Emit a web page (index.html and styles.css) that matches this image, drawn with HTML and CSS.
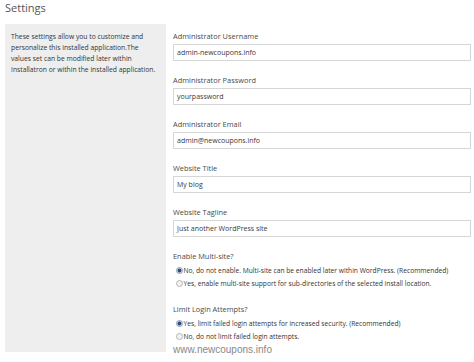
FILE: index.html
```html
<!DOCTYPE html>
<html>
<head>
<meta charset="utf-8">
<link rel="stylesheet" href="styles.css">
</head>
<body>
<h1 class="title">Settings</h1>
<div class="layout">
  <aside class="panel">
    <p>These settings allow you to customize and<br>personalize this installed application.The<br>values set can be modified later within<br>Installatron or within the installed application.</p>
  </aside>
  <main class="form">
    <div class="field">
      <div class="label">Administrator Username</div>
      <div class="input">admin-newcoupons.info</div>
    </div>
    <div class="field">
      <div class="label">Administrator Password</div>
      <div class="input">yourpassword</div>
    </div>
    <div class="field">
      <div class="label">Administrator Email</div>
      <div class="input">admin@newcoupons.info</div>
    </div>
    <div class="field">
      <div class="label">Website Title</div>
      <div class="input">My blog</div>
    </div>
    <div class="field">
      <div class="label">Website Tagline</div>
      <div class="input">Just another WordPress site</div>
    </div>
    <div class="group">
      <div class="label">Enable Multi-site?</div>
      <div class="radio"><span class="dot on"></span>No, do not enable. Multi-site can be enabled later within WordPress. (Recommended)</div>
      <div class="radio"><span class="dot"></span>Yes, enable multi-site support for sub-directories of the selected install location.</div>
    </div>
    <div class="group">
      <div class="label">Limit Login Attempts?</div>
      <div class="radio"><span class="dot on"></span>Yes, limit failed login attempts for increased security. (Recommended)</div>
      <div class="radio"><span class="dot"></span>No, do not limit failed login attempts.</div>
    </div>
    <div class="watermark">www.newcoupons.info</div>
  </main>
</div>
</body>
</html>
```
FILE: styles.css
```css
html, body { margin: 0; padding: 0; background: #fff; }
body { width: 474px; height: 362px; overflow: hidden; font-family: "Open Sans", "Noto Sans", sans-serif; color: #444; }
.title { margin: 0; padding: 0 0 0 5px; height: 24px; font-size: 11px; font-weight: normal; line-height: 16px; color: #555; }
.layout { display: flex; align-items: flex-start; }
.panel { margin-left: 5px; width: 161px; height: 328px; background: #eeeeee; box-sizing: border-box; padding: 8px 4px 8px 6px; }
.panel p { margin: 0; font-size: 6.75px; line-height: 10.85px; color: #333; white-space: nowrap; }
.form { margin-left: 7px; width: 298px; padding-top: 7px; }
.field { margin-bottom: 14px; }
.label { font-size: 7.4px; line-height: 11px; color: #4a4a4a; margin-bottom: 2px; }
.input { height: 17px; border: 1px solid #d6d6d6; box-sizing: border-box; font-size: 7px; line-height: 15px; padding-left: 3px; color: #3a3a3a; }
.group .label { margin-bottom: 2px; }
.group + .group { margin-top: 13.5px; }
.radio { font-size: 6.7px; line-height: 13px; color: #333; display: flex; align-items: center; white-space: nowrap; }
.dot { width: 7px; height: 7px; border-radius: 50%; border: 1px solid #b5b5b5; box-sizing: border-box; margin: 0 0.5px 0 3px; background: #f2f2f2; }
.dot.on { background: radial-gradient(circle, #2b4d7e 0 1.6px, #c9d3df 2.2px); border-color: #8f9db0; }
.watermark { font-family: "Liberation Sans", Arial, sans-serif; font-size: 10px; color: #888; line-height: 12px; margin-top: 1.5px; }
```
